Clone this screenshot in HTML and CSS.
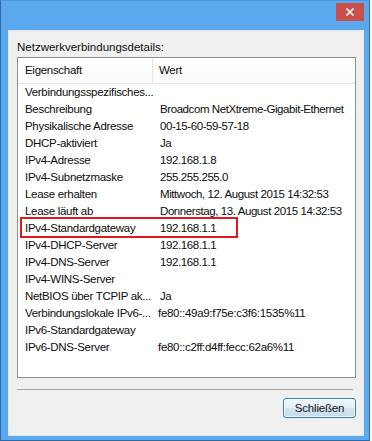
FILE: index.html
```html
<!DOCTYPE html>
<html lang="de">
<head>
<meta charset="utf-8">
<title>Netzwerkverbindungsdetails</title>
<link rel="stylesheet" href="styles.css">
</head>
<body>
<div class="window">
  <div class="titlebar">
    <button class="close" aria-label="Schließen">
      <svg width="10" height="10" viewBox="0 0 10 10"><path d="M1.5 1.5 L8.5 8.5 M8.5 1.5 L1.5 8.5" stroke="#fff" stroke-width="1.6" fill="none"/></svg>
    </button>
  </div>
  <div class="client">
    <div class="label">Netzwerkverbindungsdetails:</div>
    <div class="list">
      <div class="header">
        <div class="hcell c1">Eigenschaft</div>
        <div class="hcell c2">Wert</div>
      </div>
      <div class="row"><div class="c1">Verbindungsspezifisches...</div><div class="c2"></div></div>
      <div class="row"><div class="c1">Beschreibung</div><div class="c2">Broadcom NetXtreme-Gigabit-Ethernet</div></div>
      <div class="row"><div class="c1">Physikalische Adresse</div><div class="c2">00-15-60-59-57-18</div></div>
      <div class="row"><div class="c1">DHCP-aktiviert</div><div class="c2">Ja</div></div>
      <div class="row"><div class="c1">IPv4-Adresse</div><div class="c2">192.168.1.8</div></div>
      <div class="row"><div class="c1">IPv4-Subnetzmaske</div><div class="c2">255.255.255.0</div></div>
      <div class="row"><div class="c1">Lease erhalten</div><div class="c2">Mittwoch, 12. August 2015 14:32:53</div></div>
      <div class="row"><div class="c1">Lease läuft ab</div><div class="c2">Donnerstag, 13. August 2015 14:32:53</div></div>
      <div class="row marked"><div class="c1">IPv4-Standardgateway</div><div class="c2">192.168.1.1</div><div class="highlight"></div></div>
      <div class="row"><div class="c1">IPv4-DHCP-Server</div><div class="c2">192.168.1.1</div></div>
      <div class="row"><div class="c1">IPv4-DNS-Server</div><div class="c2">192.168.1.1</div></div>
      <div class="row"><div class="c1">IPv4-WINS-Server</div><div class="c2"></div></div>
      <div class="row"><div class="c1">NetBIOS über TCPIP ak...</div><div class="c2">Ja</div></div>
      <div class="row"><div class="c1">Verbindungslokale IPv6-...</div><div class="c2 v6">fe80::49a9:f75e:c3f6:1535%11</div></div>
      <div class="row"><div class="c1">IPv6-Standardgateway</div><div class="c2"></div></div>
      <div class="row"><div class="c1">IPv6-DNS-Server</div><div class="c2 v6">fe80::c2ff:d4ff:fecc:62a6%11</div></div>
    </div>
    <div class="separator"></div>
    <div class="actions">
      <button class="btn">Schließen</button>
    </div>
  </div>
</div>
</body>
</html>
```
FILE: styles.css
```css
html, body {
  margin: 0;
  padding: 0;
  background: #ffffff;
}
body {
  width: 372px;
  height: 441px;
  overflow: hidden;
  font-family: "Liberation Sans", Arial, sans-serif;
  font-size: 11.5px;
  letter-spacing: -0.3px;
  color: #0d0d0d;
}
.window {
  box-sizing: border-box;
  width: 370px;
  height: 441px;
  background: #5ca8ee;
  border: 1px solid #2f6aa6;
  border-top-color: #4d97dd;
  padding: 0 5px 4px 7px;
  display: flex;
  flex-direction: column;
}
.titlebar {
  height: 29px;
  flex: none;
  display: flex;
  justify-content: flex-end;
  align-items: flex-start;
}
.close {
  width: 28px;
  height: 18px;
  margin-top: 2px;
  padding: 0;
  border: none;
  background: #c9514b;
  display: flex;
  align-items: center;
  justify-content: center;
}
.client {
  flex: 1;
  background: #f0f0f0;
  display: flex;
  flex-direction: column;
  padding: 10px 8px 0 9px;
  box-shadow: inset 0 0 0 1px #dbe9f6;
}
.label {
  line-height: 15px;
  height: 15px;
  letter-spacing: 0;
}
.list {
  margin-top: 2px;
  height: 321px;
  box-sizing: border-box;
  border: 1px solid #8a8f97;
  background: #fff;
  display: flex;
  flex-direction: column;
}
.header {
  display: flex;
  height: 25px;
  border-bottom: 1px solid #e3e3e3;
  background: linear-gradient(#ffffff, #fbfbfb);
  flex: none;
}
.hcell {
  line-height: 25px;
}
.c1 {
  box-sizing: border-box;
  width: 135px;
  flex: none;
  padding-left: 7px;
  white-space: nowrap;
}
.hcell.c1 {
  border-right: 1px solid #e3e3e3;
}
.c2 {
  padding-left: 6px;
  white-space: nowrap;
}
.row .c2 {
  padding-left: 7px;
  letter-spacing: -0.42px;
}
.row .c2.v6 {
  padding-left: 5px;
  letter-spacing: -0.3px;
}
.row {
  position: relative;
  display: flex;
  height: 17px;
  line-height: 17px;
  flex: none;
}
.highlight {
  position: absolute;
  left: 2px;
  top: -3px;
  width: 218px;
  height: 21px;
  box-sizing: border-box;
  border: 2px solid #e3171f;
}
.separator {
  margin-top: 11px;
  height: 1px;
  width: 336px;
  background: #a5a5a5;
}
.actions {
  margin-top: 8px;
  display: flex;
  justify-content: flex-end;
}
.btn {
  width: 73px;
  height: 20px;
  padding: 0;
  font-family: inherit;
  font-size: 11.5px;
  letter-spacing: -0.2px;
  color: #111;
  border: 1px solid #3c7fb1;
  border-radius: 3px;
  background: linear-gradient(#f1f6fb 0%, #e4eef7 50%, #d3e3f1 51%, #c8dced 100%);
  box-shadow: inset 0 0 0 1px rgba(255,255,255,0.7);
}
```
